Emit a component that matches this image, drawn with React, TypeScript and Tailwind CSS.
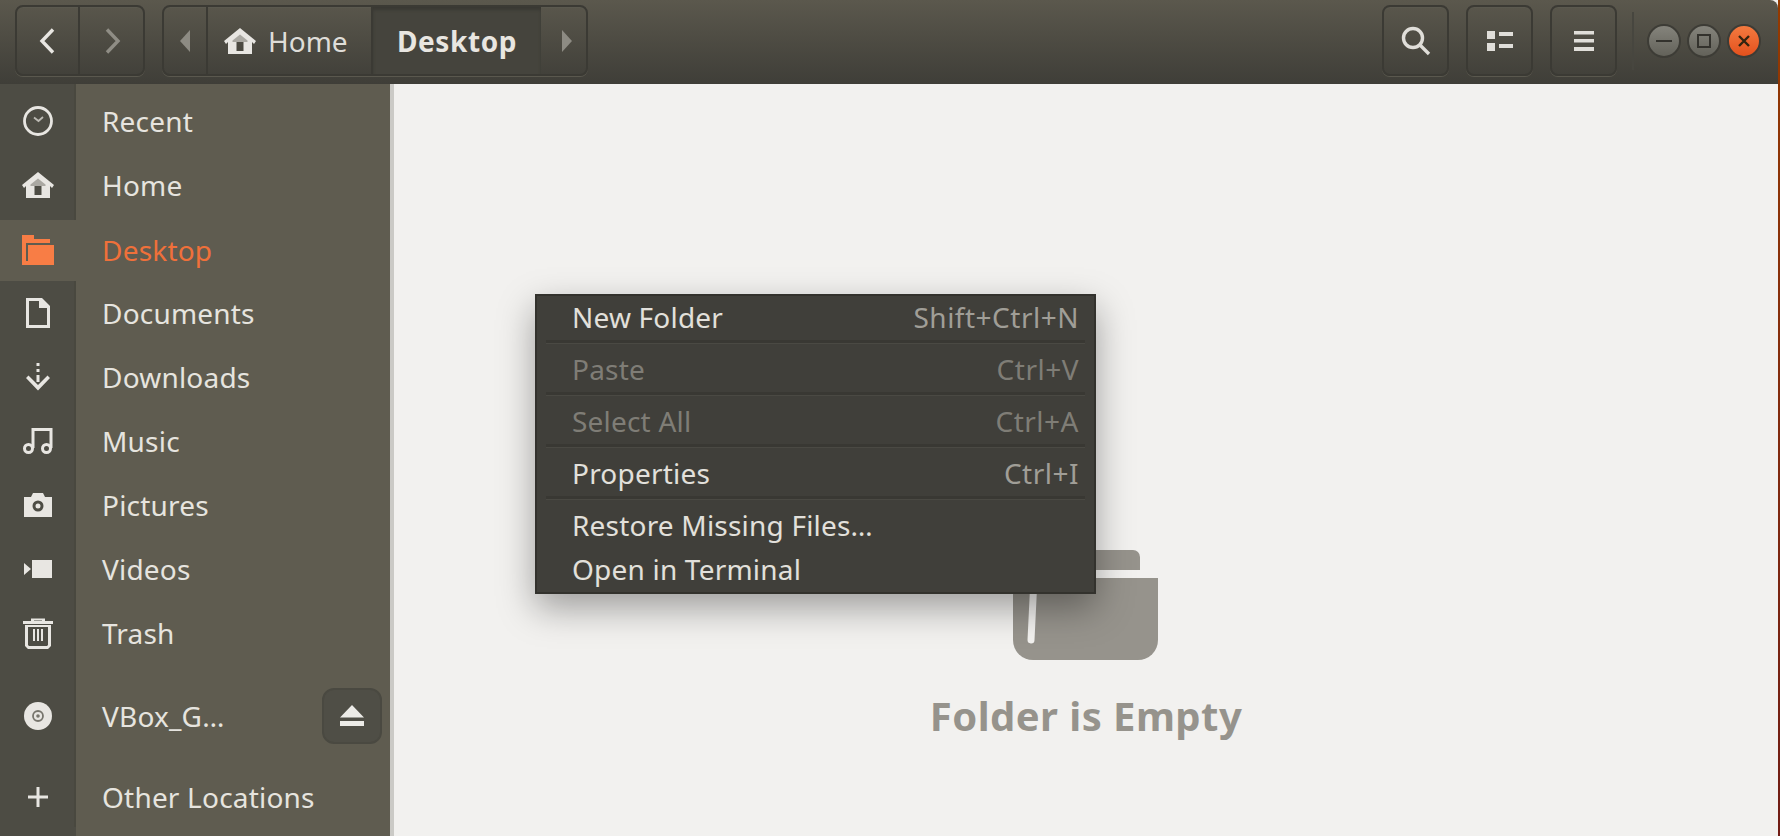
import type { ReactNode } from "react";

const FONT = "font-['Noto_Sans',sans-serif]";

function ClockIcon() {
  return (
    <svg width="30" height="30" viewBox="0 0 30 30" fill="none" stroke="#e8e6e2">
      <circle cx="15" cy="15" r="13.500" strokeWidth="2.800" />
      <path d="M11 11.500l4.500 3.500 4.500-4" strokeWidth="1.800" stroke="#bdbbb5" />
    </svg>
  );
}

function HomeIcon() {
  return (
    <svg width="32" height="26" viewBox="0 0 32 26" fill="#e8e6e2">
      <path
        d="M16 0l16 13-2 3-2-2v12H4V14l-2 2-2-3zM12.500 14v9h7v-9z"
        fillRule="evenodd"
      />
      <path d="M16 6.500l7.500 6V14h-15v-1.500z" fill="#4d4c44" opacity="0.4" />
    </svg>
  );
}

function FolderIcon() {
  return (
    <svg width="32" height="30" viewBox="0 0 32 30" fill="#f87d45">
      <path d="M0 0h12v4h16v4H4v18h2V10h26v20H0z" />
    </svg>
  );
}

function FileIcon() {
  return (
    <svg width="24" height="30" viewBox="0 0 24 30" fill="#e8e6e2">
      <path d="M0 0h16l8 8v22H0zM3 3v24h18V10h-8V3z" fillRule="evenodd" />
    </svg>
  );
}

function DownloadIcon() {
  return (
    <svg width="26" height="30" viewBox="0 0 26 30" fill="#e8e6e2">
      <path d="M11.500 1h3v3h-3zM11.500 7h3v3h-3zM11.500 13h3v7h-3z" />
      <path d="M1 16l2.500-2.500L13 23l9.500-9.500L25 16 13 28.500z" />
    </svg>
  );
}

function MusicIcon() {
  return (
    <svg width="30" height="26" viewBox="0 0 30 26" fill="none" stroke="#e8e6e2" strokeWidth="3">
      <circle cx="5.500" cy="20.500" r="4" />
      <circle cx="23.500" cy="20.500" r="4" />
      <path d="M10 20V1.500h18V20" />
    </svg>
  );
}

function CameraIcon() {
  return (
    <svg width="28" height="24" viewBox="0 0 28 24" fill="#e8e6e2">
      <path
        d="M0 4h7l2-4h10l2 4h7v20H0zM14 7.500a5.500 5.500 0 100 11 5.500 5.500 0 000-11zM14 10.500a2.500 2.500 0 110 5 2.500 2.500 0 010-5z"
        fillRule="evenodd"
      />
    </svg>
  );
}

function VideoIcon() {
  return (
    <svg width="28" height="18" viewBox="0 0 28 18" fill="#e8e6e2">
      <path d="M8 0h20v18H8zM0 3l7 6-7 6z" />
    </svg>
  );
}

function TrashIcon() {
  return (
    <svg width="30" height="32" viewBox="0 0 30 32" fill="#e8e6e2">
      <path d="M0 4h8V1.500h14V4h8v3H0zM11 3.500V4h8v-.5z" fillRule="evenodd" />
      <path
        d="M2 8h26v21l-3 3H5l-3-3zM5 10v18l1 1h18l1-1V10zM10 12h2v12h-2zM14 12h2v12h-2zM18 12h2v12h-2z"
        fillRule="evenodd"
      />
    </svg>
  );
}

function DiscIcon() {
  return (
    <svg width="28" height="28" viewBox="0 0 28 28">
      <circle cx="14" cy="14" r="14" fill="#e8e6e2" />
      <circle cx="14" cy="14" r="5" fill="none" stroke="#77756d" strokeWidth="1.800" />
      <circle cx="14" cy="14" r="1.800" fill="#77756d" />
    </svg>
  );
}

function PlusIcon() {
  return (
    <svg width="20" height="20" viewBox="0 0 20 20" fill="#e8e6e2">
      <path d="M8.500 0h3v8.500H20v3h-8.500V20h-3v-8.500H0v-3h8.500z" />
    </svg>
  );
}

function EjectIcon() {
  return (
    <svg width="24" height="22" viewBox="0 0 24 22" fill="#ecebe7">
      <path d="M12 0l12 12.500H0zM0 16h24v5H0z" />
    </svg>
  );
}

function ToolButton({ children }: { children: ReactNode }) {
  return (
    <button className="flex h-[71px] w-[67px] items-center justify-center rounded-lg border-2 border-[#3b3a34] shadow-[inset_0_1px_0_#5b594f,0_1px_0_#5a584e]">
      {children}
    </button>
  );
}

type Place = { label: string; icon: ReactNode; active?: boolean; inset?: string };

const PLACES: Place[] = [
  { label: "Recent", icon: <ClockIcon />, inset: "pt-[5px]" },
  { label: "Home", icon: <HomeIcon />, inset: "pb-[3px]" },
  { label: "Desktop", icon: <FolderIcon />, active: true, inset: "pb-[2px]" },
  { label: "Documents", icon: <FileIcon /> },
  { label: "Downloads", icon: <DownloadIcon /> },
  { label: "Music", icon: <MusicIcon /> },
  { label: "Pictures", icon: <CameraIcon /> },
  { label: "Videos", icon: <VideoIcon /> },
  { label: "Trash", icon: <TrashIcon /> },
];

const ROW_HEIGHT: Record<string, string> = {
  Recent: "h-[69px]",
  Home: "h-[67px]",
  Desktop: "h-[61px]",
};

function SidebarRow({
  label,
  icon,
  active,
  inset = "",
  height,
  children,
}: Place & { height: string; children?: ReactNode }) {
  return (
    <div className={`flex items-stretch ${height}`}>
      <div
        className={`flex w-[76px] shrink-0 items-center justify-center ${inset} ${
          active ? "" : "bg-[#4d4c44] shadow-[inset_-2px_0_0_#49483f]"
        }`}
      >
        {icon}
      </div>
      <div
        className={`ml-[26px] flex flex-1 items-center text-[28px] leading-none tracking-[0.2px] ${inset} ${
          active ? "text-[#f0703a]" : "text-[#e6e4df]"
        }`}
      >
        {label}
      </div>
      {children}
    </div>
  );
}

const MENU = [
  { label: "New Folder", keys: "Shift+Ctrl+N", sep: true },
  { label: "Paste", keys: "Ctrl+V", sep: true, off: true },
  { label: "Select All", keys: "Ctrl+A", sep: true, off: true },
  { label: "Properties", keys: "Ctrl+I", sep: true },
  { label: "Restore Missing Files…", keys: "" },
  { label: "Open in Terminal", keys: "" },
];

export default function App() {
  return (
    <div className="flex h-[836px] w-[1780px] overflow-hidden bg-[#f2f1ef]">
      <div className={`flex h-full w-[1778px] flex-col ${FONT}`}>
        {/* header bar */}
        <header className="flex h-[84px] shrink-0 items-center rounded-tr-lg bg-gradient-to-b from-[#5b584d] to-[#3f3e38] pb-[3px] pl-[15px]">
          <div className="flex h-[71px] w-[130px] rounded-lg border-2 border-[#3b3a34] shadow-[inset_0_1px_0_#5b594f,0_1px_0_#5a584e]">
            <div className="flex w-[63px] items-center justify-center border-r-2 border-[#3b3a34] pr-[2px]">
              <svg width="16" height="26" viewBox="0 0 16 26" fill="none" stroke="#e8e6e2" strokeWidth="3.400">
                <path d="M14 1.500L3 13l11 11.500" />
              </svg>
            </div>
            <div className="flex flex-1 items-center justify-center pl-[3px]">
              <svg width="16" height="26" viewBox="0 0 16 26" fill="none" stroke="#8f8d85" strokeWidth="3.400">
                <path d="M2 1.500L13 13 2 24.500" />
              </svg>
            </div>
          </div>

          <div className="ml-[17px] flex h-[71px] w-[426px] rounded-lg border-2 border-[#3b3a34] shadow-[inset_0_1px_0_#5b594f,0_1px_0_#5a584e]">
            <div className="flex w-[44px] items-center justify-center border-r-2 border-[#3b3a34]">
              <svg width="10" height="22" viewBox="0 0 10 22" fill="#8d8b83">
                <path d="M10 0v22L0 11z" />
              </svg>
            </div>
            <div className="flex w-[165px] items-center border-r-2 border-[#3b3a34] pl-[16px]">
              <HomeIcon />
              <span className="ml-[12px] text-[28px] leading-none text-[#dfddd8]">Home</span>
            </div>
            <div className="flex w-[168px] items-center justify-center bg-[#45443d] text-[28px] leading-none font-bold tracking-[0.6px] text-[#e8e6e1] shadow-[inset_0_3px_3px_#3a3933]">
              Desktop
            </div>
            <div className="flex flex-1 items-center justify-center pl-[6px]">
              <svg width="10" height="22" viewBox="0 0 10 22" fill="#8d8b83">
                <path d="M0 0v22l10-11z" />
              </svg>
            </div>
          </div>

          <div className="ml-auto flex items-center gap-[17px]">
            <ToolButton>
              <svg width="30" height="30" viewBox="0 0 30 30" fill="none" stroke="#e0ded9">
                <circle cx="12" cy="12" r="9.500" strokeWidth="3.400" />
                <path d="M18.500 18.500L28 28" strokeWidth="3.400" />
              </svg>
            </ToolButton>
            <ToolButton>
              <svg width="26" height="20" viewBox="0 0 26 20" fill="#e0ded9">
                <path d="M0 0h8v8H0zM0 12h8v8H0zM12 1h14v4H12zM12 13h14v4H12z" />
              </svg>
            </ToolButton>
            <ToolButton>
              <svg width="20" height="20" viewBox="0 0 20 20" fill="#e0ded9">
                <path d="M0 0h20v3.500H0zM0 8h20v3.500H0zM0 16h20v4H0z" />
              </svg>
            </ToolButton>
          </div>

          <div className="ml-[15px] h-[58px] w-[2px] bg-[#47463f]" />

          <div className="mr-[17px] ml-[13px] flex items-center gap-[6px]">
            <div className="flex h-[34px] w-[34px] items-center justify-center rounded-full border-2 border-[#3d3c36] bg-gradient-to-b from-[#85847c] to-[#63625a]">
              <div className="h-[2px] w-[16px] bg-[#33322d]" />
            </div>
            <div className="flex h-[34px] w-[34px] items-center justify-center rounded-full border-2 border-[#3d3c36] bg-gradient-to-b from-[#85847c] to-[#63625a]">
              <div className="h-[14px] w-[14px] border-2 border-[#33322d]" />
            </div>
            <div className="flex h-[34px] w-[34px] items-center justify-center rounded-full border-2 border-[#3d3c36] bg-gradient-to-b from-[#f47a3f] to-[#e4501c]">
              <svg width="12" height="12" viewBox="0 0 12 12" stroke="#33240f" strokeWidth="2.400">
                <path d="M1 1l10 10M11 1L1 11" />
              </svg>
            </div>
          </div>
        </header>

        <div className="flex min-h-0 flex-1">
          {/* places sidebar */}
          <aside className="flex w-[394px] shrink-0 flex-col border-r-4 border-[#cbcac6] bg-[#5f5c50]">
            {PLACES.map((p) => (
              <SidebarRow key={p.label} {...p} height={ROW_HEIGHT[p.label] ?? "h-[64px]"} />
            ))}
            <SidebarRow label="VBox_G…" icon={<DiscIcon />} height="h-[102px]">
              <div className="mr-[8px] flex h-[56px] w-[60px] items-center justify-center self-center rounded-xl border-2 border-[#4a4941] bg-[#4f4e46]">
                <EjectIcon />
              </div>
            </SidebarRow>
            <SidebarRow label="Other Locations" icon={<PlusIcon />} height="h-[60px]" />
            <div className="flex flex-1">
              <div className="w-[76px] bg-[#4d4c44]" />
            </div>
          </aside>

          {/* empty folder view */}
          <main className="relative flex flex-1 flex-col items-center pt-[466px] text-[#96938c]">
            <svg width="146" height="110" viewBox="0 0 146 110" className="mb-[36px]">
              <path d="M18 0h102a7 7 0 017 7v13H18z" fill="#96938c" />
              <path d="M0 28h145v62a20 20 0 01-20 20H20a20 20 0 01-20-20z" fill="#96938c" />
              <path d="M21 28l-3 62" stroke="#f2f1ef" strokeWidth="7" strokeLinecap="round" fill="none" />
            </svg>
            <h1 className="text-[40px] leading-none font-bold tracking-[0.45px]">Folder is Empty</h1>
          </main>
        </div>
      </div>

      {/* desktop wallpaper peeking past the window edge */}
      <div className="h-full w-[2px] bg-gradient-to-b from-[#953a00] to-[#701c14]" />

      {/* context menu */}
      <div
        className={`absolute top-[294px] left-[535px] flex w-[561px] flex-col border-2 border-[#33322d] bg-[#403f3a] text-[28px] leading-none tracking-[0.2px] shadow-[0_14px_34px_rgba(0,0,0,0.35)] ${FONT}`}
      >
        {MENU.map((item) => (
          <div key={item.label} className="flex flex-col">
            <div
              className={`flex h-[44px] items-center justify-between pr-[15px] pb-[3px] pl-[35px] ${
                item.off ? "text-[#7f7d76]" : "text-[#e2e0db]"
              }`}
            >
              <span>{item.label}</span>
              <span className={`tracking-[0.5px] ${item.off ? "text-[#7f7d76]" : "text-[#a09e97]"}`}>{item.keys}</span>
            </div>
            {item.sep && <div className="mx-[9px] mb-[5px] h-[3px] bg-[#393833] shadow-[0_1px_0_#4a4943]" />}
          </div>
        ))}
      </div>
    </div>
  );
}
